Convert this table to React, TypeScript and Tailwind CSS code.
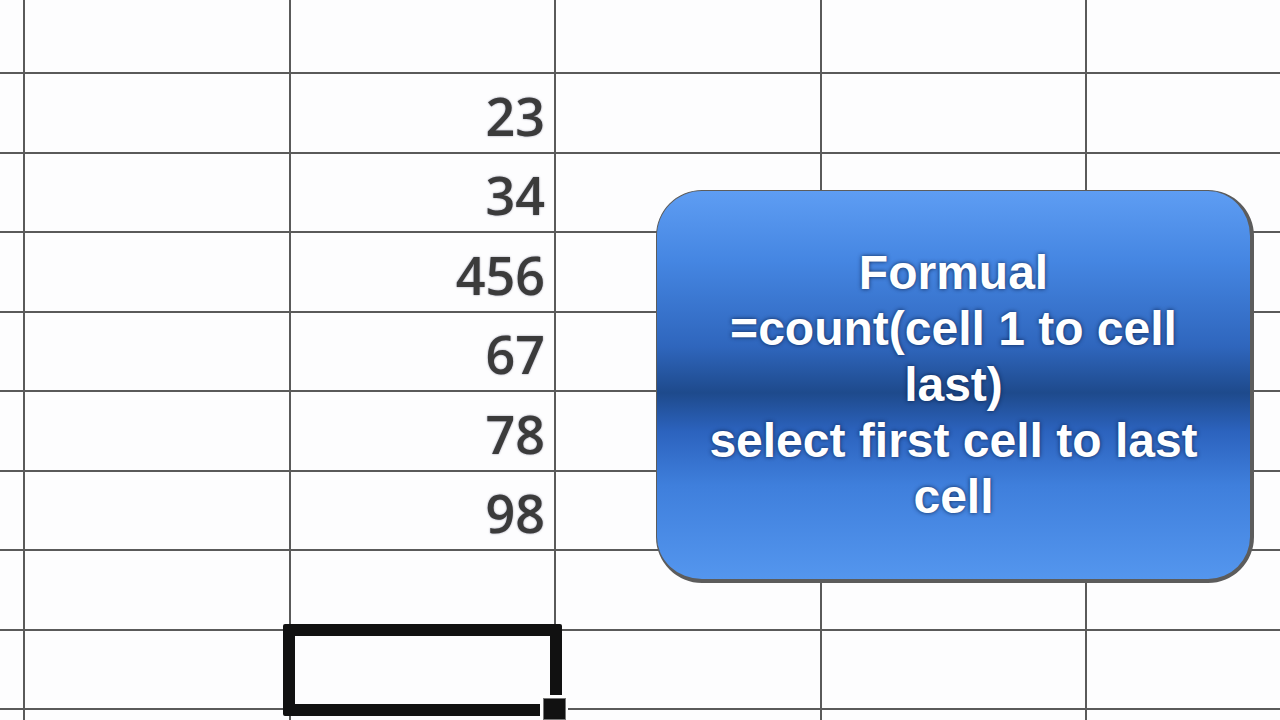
const numbers: Record<number, string> = { 1: "23", 2: "34", 3: "456", 4: "67", 5: "78", 6: "98" };

const rows = Array.from({ length: 11 }, (_, r) => r);
const cols = Array.from({ length: 6 }, (_, c) => c);

const lines = ["Formual", "=count(cell 1 to cell", "last)", "select first cell to last", "cell"];

export default function App() {
  return (
    <div className="relative w-[1280px] h-[720px] overflow-hidden bg-white">
      {/* Sheet grid */}
      <div className="grid gap-[2px] bg-[#5a5a5a] w-[1350px] grid-cols-[23px_repeat(5,263.5px)] grid-rows-[72px_repeat(9,77.5px)_20px]">
        {rows.map((r) =>
          cols.map((c) => (
            <div
              key={`${r}-${c}`}
              className="bg-[#fdfdfe] flex items-end justify-end pr-[9px] pb-[10px]"
            >
              {c === 2 && numbers[r] && (
                <span className="font-['Open_Sans',sans-serif] font-semibold text-[52px] leading-none text-[#3b3b3b] [text-shadow:0_0_2px_rgba(60,60,90,0.6)]">
                  {numbers[r]}
                </span>
              )}
            </div>
          ))
        )}
      </div>

      {/* Selected cell */}
      <div className="absolute left-[283px] top-[624px] w-[279px] h-[92px] border-[12px] border-[#111] rounded-[2px]" />
      <div className="absolute left-[540px] top-[695px] w-[28px] h-[30px] bg-white" />
      <div className="absolute left-[543px] top-[698px] w-[23px] h-[22px] bg-[#111] border border-[#777]" />

      {/* Callout */}
      <div className="absolute left-[656px] top-[190px] w-[598px] h-[393px] rounded-[46px] border-t border-l border-r-[4px] border-b-[4px] border-[#5c5c5c] bg-[linear-gradient(to_bottom,#5e9df3_0%,#4586e2_18%,#2f66bd_40%,#1e4a8c_52%,#2c63be_62%,#3f7fdc_76%,#5496ee_100%)] flex flex-col items-center justify-center">
        {lines.map((line) => (
          <div
            key={line}
            className="font-['Liberation_Sans',Arial,sans-serif] font-bold text-[48px] leading-[56px] text-white [text-shadow:0_0_4px_rgba(10,30,70,0.9)]"
          >
            {line}
          </div>
        ))}
      </div>
    </div>
  );
}
